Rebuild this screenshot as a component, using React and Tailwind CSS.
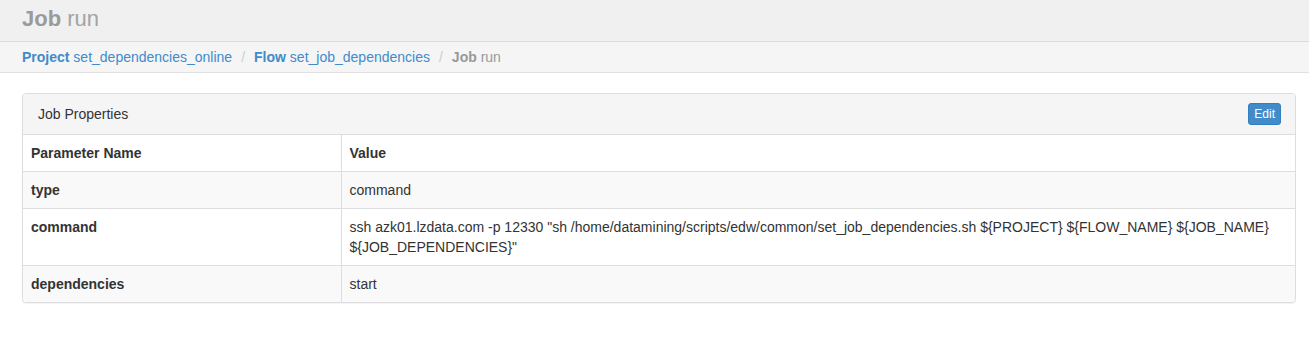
import React from "react";

const rows = [
  { name: "type", value: "command" },
  {
    name: "command",
    value:
      'ssh azk01.lzdata.com -p 12330 "sh /home/datamining/scripts/edw/common/set_job_dependencies.sh ${PROJECT} ${FLOW_NAME} ${JOB_NAME} ${JOB_DEPENDENCIES}"',
  },
  { name: "dependencies", value: "start" },
];

export default function App() {
  return (
    <div
      className="w-[1309px] h-[337px] bg-white text-[14px] leading-[20px] text-[#333]"
      style={{ fontFamily: '"Liberation Sans", Arial, sans-serif' }}
    >
      <div className="h-[42px] bg-[#f0f0f0] border-b border-[#dcdcdc] px-[22px] flex items-center">
        <h1 className="text-[22px] leading-none text-[#9a9a9a] -mt-[3px]">
          <span className="font-bold">Job</span>{" "}
          <span className="font-light text-[#a3a3a3]">run</span>
        </h1>
      </div>
      <div className="h-[31px] bg-[#f5f5f5] border-b border-[#e0e0e0] px-[22px] flex items-center">
        <a className="text-[#428bca]">
          <span className="font-bold">Project</span> set_dependencies_online
        </a>
        <span className="px-[9px] text-[#ccc]">/</span>
        <a className="text-[#428bca]">
          <span className="font-bold">Flow</span> set_job_dependencies
        </a>
        <span className="px-[9px] text-[#ccc]">/</span>
        <span className="text-[#999]">
          <span className="font-bold">Job</span> run
        </span>
      </div>
      <div className="px-[22px] pt-[20px]">
        <div className="w-[1274px] border border-[#ddd] rounded-[4px] bg-white shadow-[0_1px_1px_rgba(0,0,0,0.05)] overflow-hidden">
          <div className="h-[41px] bg-[#f5f5f5] border-b border-[#ddd] flex items-center justify-between pl-[15px] pr-[14px]">
            <span className="text-[#333]">Job Properties</span>
            <button className="h-[22px] px-[5px] bg-[#428bca] border border-[#357ebd] rounded-[3px] text-white text-[12px] leading-[18px]">
              Edit
            </button>
          </div>
          <table className="w-full border-collapse">
            <thead>
              <tr className="bg-white">
                <th className="w-[318px] text-left font-bold px-[8px] py-[8px] border-r border-[#ddd] align-top">
                  Parameter Name
                </th>
                <th className="text-left font-bold px-[8px] py-[8px] align-top">Value</th>
              </tr>
            </thead>
            <tbody>
              {rows.map((r, i) => (
                <tr
                  key={r.name}
                  className={`border-t border-[#ddd] ${i % 2 === 0 ? "bg-[#f9f9f9]" : "bg-white"}`}
                >
                  <td className="font-bold px-[8px] py-[8px] border-r border-[#ddd] align-top">
                    {r.name}
                  </td>
                  <td className="px-[8px] py-[8px] align-top">{r.value}</td>
                </tr>
              ))}
            </tbody>
          </table>
        </div>
      </div>
    </div>
  );
}
